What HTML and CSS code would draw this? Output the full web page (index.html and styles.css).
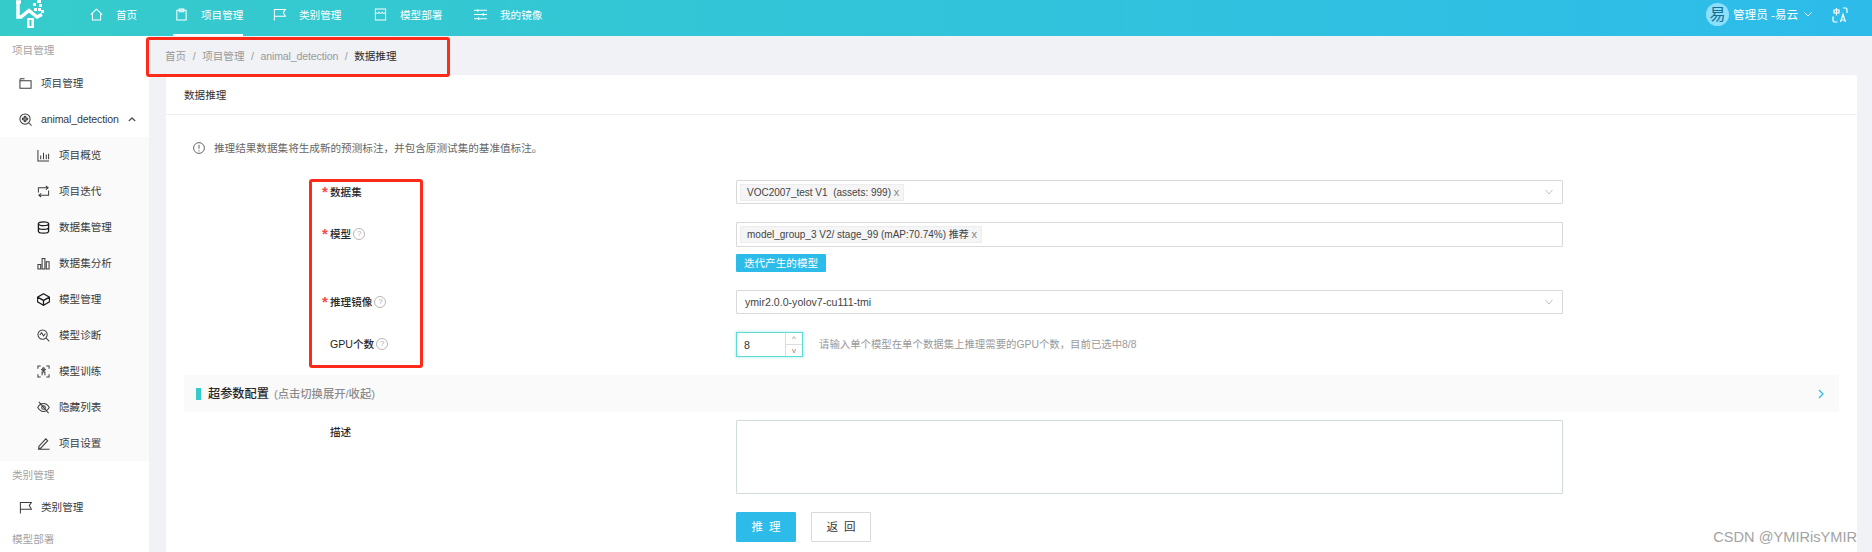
FILE: index.html
```html
<!DOCTYPE html>
<html lang="zh-CN">
<head>
<meta charset="utf-8">
<title>数据推理</title>
<link rel="stylesheet" href="styles.css">
</head>
<body>
<header class="topbar">
  <svg class="logo" viewBox="0 0 30 30"><path class="logo-line" d="M1 2h5M3 2v15h3l8-6.500L22 17l5-2.500"/><path d="M12 18h7v10h-7z"/><path class="logo-slot" d="M14.500 20h2v6h-2z"/><rect x="18" y="3" width="3" height="3"/><rect x="22" y="0" width="4" height="3"/><rect x="24" y="4" width="3" height="3"/><rect x="19" y="8" width="3" height="3"/><rect x="23" y="8" width="3" height="3"/><rect x="26" y="10" width="3" height="3"/></svg>
  <nav class="nav">
    <a class="nav-item"><svg class="ico" viewBox="0 0 14 14"><path d="M.8 7.200 7 1.200l6.200 6M2.600 6v7h8.800V6"/></svg><span>首页</span></a>
    <a class="nav-item active"><svg class="ico" viewBox="0 0 14 14"><path d="M2 2.500h10v10.500H2zM4.500 1h5v3h-5z"/></svg><span>项目管理</span></a>
    <a class="nav-item"><svg class="ico" viewBox="0 0 14 14"><path d="M1.500 13.500V1.500h12L11 5l2.500 4H1.500"/></svg><span>类别管理</span></a>
    <a class="nav-item"><svg class="ico" viewBox="0 0 14 14"><path d="M1.500 1h11v12h-11zM1.500 4.500c1 1.600 2.800 1.600 3.700 0 .9 1.600 2.700 1.600 3.600 0 .9 1.600 2.700 1.600 3.700 0"/></svg><span>模型部署</span></a>
    <a class="nav-item"><svg class="ico" viewBox="0 0 14 14"><path d="M0 2.500h14M0 7h14M0 11.500h14M4 1v3M10 5.500v3M5 10v3"/></svg><span>我的镜像</span></a>
  </nav>
  <div class="user">
    <span class="avatar">易</span>
    <span class="user-name">管理员 -易云</span>
    <svg class="user-caret" viewBox="0 0 8 5"><path d="M.5.500 4 4 7.500.5"/></svg>
    <svg class="lang" viewBox="0 0 16 16"><path d="M11 1h2.500a1.500 1.500 0 0 1 1.500 1.500V6M1 9.500V13a2 2 0 0 0 2 2h2.500"/><path d="M2 3h5v3H2zM4.500 1v7.500M8.500 15l2.500-7.500 2.500 7.500M9.500 13h3"/></svg>
  </div>
</header>
<div class="layout">
  <aside class="sidebar">
    <div class="group-title first">项目管理</div>
    <a class="side-item"><svg class="ico dark" viewBox="0 0 14 14"><path d="M1 2.500V12h12V4H1M1 2h5"/></svg><span>项目管理</span></a>
    <a class="side-item"><svg class="ico dark" viewBox="0 0 14 14"><circle cx="6.500" cy="6.500" r="5.500"/><circle cx="6.500" cy="4.500" r="1"/><circle cx="6.500" cy="8.500" r="1"/><circle cx="4.500" cy="6.500" r="1"/><circle cx="8.500" cy="6.500" r="1"/><path d="m10.500 10.500 3 3"/></svg><span class="latin">animal_detection</span><svg class="caret-up" viewBox="0 0 8 5"><path d="M.8 4 4 1l3.200 3"/></svg></a>
    <div class="submenu">
      <a class="sub-item"><svg class="ico dark" viewBox="0 0 14 14"><path d="M1 1v12h12M4 11V7M7 11V4M10 11V6M12.500 11V5"/></svg><span>项目概览</span></a>
      <a class="sub-item"><svg class="ico dark" viewBox="0 0 14 14"><path d="M1.500 8V3h10M9.500 1l2.500 2-2.500 2M12.500 6v5h-10M4.500 9l-2.500 2 2.500 2"/></svg><span>项目迭代</span></a>
      <a class="sub-item"><svg class="ico black" viewBox="0 0 14 14"><ellipse cx="7" cy="3" rx="5.500" ry="2"/><path d="M1.500 3v8c0 1.100 2.500 2 5.500 2s5.500-.9 5.500-2V3M1.500 7c0 1.100 2.500 2 5.500 2s5.500-.9 5.500-2"/></svg><span>数据集管理</span></a>
      <a class="sub-item"><svg class="ico dark" viewBox="0 0 14 14"><path d="M1 8h3v5H1zM5.500 1.500h3V13h-3zM10 5h3v8h-3z"/></svg><span>数据集分析</span></a>
      <a class="sub-item"><svg class="ico black" viewBox="0 0 14 14"><path d="M7 .8 13.500 4.500v5L7 13.200.5 9.500v-5zM.5 4.500 7 8l6.500-3.500M7 8v5"/></svg><span>模型管理</span></a>
      <a class="sub-item"><svg class="ico dark" viewBox="0 0 14 14"><circle cx="6" cy="6" r="5"/><path d="m9.800 9.800 3.500 3.500M3 6.500 5 4l2 3.500L9 5"/></svg><span>模型诊断</span></a>
      <a class="sub-item"><svg class="ico dark" viewBox="0 0 14 14"><path d="M1 4V1h3M10 1h3v3M1 10v3h3M13 10v3h-3M4.500 4.500 7 6.500l2.500-2M5.500 11V7.500h3V11"/><circle cx="7" cy="4" r="1"/></svg><span>模型训练</span></a>
      <a class="sub-item"><svg class="ico dark" viewBox="0 0 14 14"><path d="M.8 7C2.500 4 4.500 2.800 7 2.800S11.500 4 13.200 7c-1.700 3-3.700 4.200-6.200 4.200S2.500 10 .8 7zM2 1l10.500 12"/><circle cx="7" cy="7" r="2"/></svg><span>隐藏列表</span></a>
      <a class="sub-item"><svg class="ico dark" viewBox="0 0 14 14"><path d="m2 10 7.500-8 2 2L4 12H2zM1 13.300h12.500"/></svg><span>项目设置</span></a>
    </div>
    <div class="group-title">类别管理</div>
    <a class="side-item"><svg class="ico dark" viewBox="0 0 14 14"><path d="M1.500 13.500V1.500h12L11 5l2.500 4H1.500"/></svg><span>类别管理</span></a>
    <div class="group-title">模型部署</div>
  </aside>
  <main class="main">
    <div class="crumbs">
      <a>首页</a><i>/</i><a>项目管理</a><i>/</i><a class="latin">animal_detection</a><i>/</i><b>数据推理</b>
    </div>
    <section class="card">
      <h1 class="card-head">数据推理</h1>
      <div class="card-body">
        <p class="tip"><svg class="tip-ico" viewBox="0 0 12 12"><circle cx="6" cy="6" r="5.400"/><path d="M6 2.800v4M6 8.200v1.200"/></svg>推理结果数据集将生成新的预测标注，并包含原测试集的基准值标注。</p>
        <div class="row">
          <label class="label"><em>*</em>数据集</label>
          <div class="field select"><span class="tag">VOC2007_test V1&nbsp; (assets: 999) <s>x</s></span><svg class="arrow" viewBox="0 0 8 6"><path d="M.5.800 4 5 7.500.8"/></svg></div>
        </div>
        <div class="row">
          <label class="label"><em>*</em>模型<span class="help">?</span></label>
          <div>
            <div class="field model"><span class="tag">model_group_3 V2/ stage_99 (mAP:70.74%) 推荐 <s>x</s></span></div>
            <button class="mini-btn">迭代产生的模型</button>
          </div>
        </div>
        <div class="row">
          <label class="label"><em>*</em>推理镜像<span class="help">?</span></label>
          <div class="field select"><span class="value">ymir2.0.0-yolov7-cu111-tmi</span><svg class="arrow" viewBox="0 0 8 6"><path d="M.5.800 4 5 7.500.8"/></svg></div>
        </div>
        <div class="row">
          <label class="label"><em></em>GPU个数<span class="help">?</span></label>
          <div class="gpu-field">
            <div class="number"><span class="num-value">8</span><span class="stepper"><i>^</i><i>v</i></span></div>
            <span class="hint">请输入单个模型在单个数据集上推理需要的GPU个数，目前已选中8/8</span>
          </div>
        </div>
        <div class="collapse">
          <span class="bar"></span><strong>超参数配置</strong><small>(点击切换展开/收起)</small>
          <svg class="more" viewBox="0 0 6 10"><path d="m1 1 4 4-4 4"/></svg>
        </div>
        <div class="row">
          <label class="label"><em></em>描述</label>
          <div class="textarea"></div>
        </div>
        <div class="row">
          <span></span>
          <div class="actions"><button class="btn primary">推理</button><button class="btn">返回</button></div>
        </div>
      </div>
    </section>
  </main>
</div>
<div class="mark mark-crumb"></div>
<div class="mark mark-form"></div>
<div class="watermark">CSDN @YMIRisYMIR</div>
</body>
</html>
```

FILE: styles.css
```css
* { box-sizing: border-box; }
html, body { margin: 0; height: 552px; overflow: hidden; }
body {
  position: relative;
  background: #f0f2f6;
  color: #333;
  font: 10.6px/16px "Liberation Sans", "Noto Sans CJK SC", sans-serif;
}
svg { display: block; flex: none; fill: none; }
a { color: inherit; text-decoration: none; }
.latin { letter-spacing: -.15px; }

/* top bar */
.topbar {
  display: flex;
  height: 36px;
  padding-left: 15px;
  color: #fff;
  background: linear-gradient(90deg, #36cbcb, #2dbcea);
}
.logo { width: 30px; height: 30px; margin-right: 43px; fill: #fff; }
.logo-line { fill: none; stroke: #fff; stroke-width: 3.500; }
.logo-slot { fill: #36cbcb; }
.nav { display: grid; grid-template-columns: 85px 98px 101px 100px auto; }
.nav-item {
  display: flex;
  align-items: center;
  gap: 13px;
  width: 70px;
  padding: 0 0 5px 2px;
  border-bottom: 2px solid transparent;
  white-space: nowrap;
}
.nav-item.active { border-bottom-color: #fff; }
.ico { width: 13px; height: 13px; stroke: currentColor; stroke-width: 1.100; }
.ico.dark { stroke: #3d3d3d; }
.ico.black { stroke: #1c1c1c; stroke-width: 1.400; }
.user {
  display: flex;
  align-items: center;
  height: 29px;
  margin-left: auto;
  padding-right: 24px;
}
.avatar {
  display: flex;
  align-items: center;
  justify-content: center;
  width: 23px;
  height: 23px;
  border-radius: 50%;
  background: #8de0fb;
  color: #146f93;
  font-size: 16px;
}
.user-name { margin-left: 4px; width: 71px; font-size: 11.600px; white-space: nowrap; }
.user-caret { width: 8px; height: 5px; stroke: #fff; }
.lang { width: 16px; height: 16px; margin-left: 20px; stroke: #fff; stroke-width: 1.200; }

/* layout */
.layout { display: flex; height: 516px; }
.sidebar { flex: none; width: 149px; background: #fff; color: #3a3a3a; overflow: hidden; }
.group-title { height: 28px; padding-left: 12px; line-height: 28px; color: #a3a3a3; }
.group-title.first { margin-bottom: 1px; }
.side-item, .sub-item { display: flex; align-items: center; gap: 9px; height: 36px; }
.side-item { padding-left: 19px; }
.sub-item { padding-left: 37px; }
.submenu { background: #fafafa; }
.caret-up { width: 8px; height: 5px; stroke: #555; stroke-width: 1.300; }

.main { flex: 1; padding: 0 15px 0 17px; min-width: 0; }
.crumbs { display: flex; align-items: center; height: 39px; margin-left: -1px; color: #999; white-space: nowrap; }
.crumbs i { margin: 0 6.500px; font-style: normal; }
.crumbs b { font-weight: 400; color: #2c2c2c; }

.card { height: 480px; background: #fff; border-radius: 2px; }
.card-head {
  height: 40px;
  margin: 0;
  padding-left: 18px;
  border-bottom: 1px solid #eceef1;
  font-size: 10.6px;
  font-weight: 400;
  line-height: 40px;
}
.card-body { padding: 25px 18px 0; }
.tip { display: flex; align-items: center; gap: 9px; height: 16px; margin: 0 0 24px 9px; color: #666; }
.tip-ico { width: 12px; height: 12px; stroke: #666; }

/* form */
.row { display: grid; grid-template-columns: 552px 827px; margin-bottom: 18px; }
.label { display: flex; align-items: center; align-self: start; height: 24px; padding-left: 138px; font-weight: 500; color: #262626; }
.label em { width: 8px; color: #f5484a; font-size: 15px; font-weight: 700; font-style: normal; line-height: 14px; }
.help {
  display: flex;
  align-items: center;
  justify-content: center;
  width: 12px;
  height: 12px;
  margin-left: 2px;
  border: 1px solid #b8b8b8;
  border-radius: 50%;
  color: #aaa;
  font-size: 8px;
  font-weight: 400;
}
.field {
  display: flex;
  align-items: center;
  border: 1px solid #d9d9d9;
  border-radius: 1px;
  background: #fff;
  color: #444;
}
.select { justify-content: space-between; height: 24px; padding: 0 9px 0 3px; }
.model { height: 25px; padding-left: 3px; }
.tag {
  display: block;
  height: 17px;
  padding: 0 4px 0 6px;
  background: #f5f5f5;
  border: 1px solid #ededed;
  font-size: 10px;
  line-height: 15px;
  white-space: pre;
}
.tag s { color: #888; font-size: 11px; text-decoration: none; }
.value { padding-left: 5px; }
.arrow { width: 8px; height: 6px; stroke: #bfbfbf; }
.mini-btn {
  display: block;
  width: 90px;
  height: 18px;
  margin-top: 7px;
  padding: 0;
  border: 0;
  border-radius: 1px;
  background: #2dbcea;
  color: #fff;
  font: inherit;
}
.gpu-field { display: flex; align-items: center; gap: 16px; }
.number {
  display: flex;
  width: 67px;
  height: 25px;
  border: 1px solid #5cdbd8;
  box-shadow: 0 0 2px 1px rgba(54, 203, 203, .25);
  color: #333;
}
.num-value { flex: 1; padding-left: 7px; line-height: 24px; }
.stepper { display: flex; flex-direction: column; width: 17px; border-left: 1px solid #ddd; color: #888; font-size: 8px; text-align: center; }
.stepper i { flex: 1; font-style: normal; line-height: 11px; }
.stepper i + i { border-top: 1px solid #ddd; }
.hint { color: #999; font-size: 10.400px; white-space: nowrap; }

.collapse {
  display: flex;
  align-items: center;
  height: 37px;
  margin-bottom: 8px;
  padding: 0 15px 0 12px;
  background: #fafafa;
}
.bar { width: 5px; height: 12px; margin-right: 7px; background: #36cbcb; }
.collapse strong { font-size: 12.200px; font-weight: 500; color: #262626; }
.collapse small { margin-left: 5px; font-size: 11.300px; font-weight: 500; color: #8c8c8c; }
.more { width: 6px; height: 10px; margin-left: auto; stroke: #2dbcea; stroke-width: 1.300; }
.textarea { height: 74px; border: 1px solid #cfdcda; border-radius: 1px; }
.actions { display: flex; gap: 15px; }
.btn {
  width: 60px;
  height: 30px;
  padding: 0;
  border: 1px solid #d9d9d9;
  border-radius: 1px;
  background: #fff;
  color: #333;
  font: inherit;
  font-size: 11.500px;
  letter-spacing: 6px;
  text-indent: 6px;
}
.btn.primary { border-color: #2dbcea; background: #2dbcea; color: #fff; }

/* overlays: screenshot annotations */
.mark { position: absolute; border: 3px solid #ff2a1a; border-radius: 3px; }
.mark-crumb { left: 146px; top: 37px; width: 304px; height: 40px; }
.mark-form { left: 309px; top: 179px; width: 114px; height: 189px; }
.watermark {
  position: absolute;
  right: 15px;
  top: 529px;
  font: 14.600px/16px "Liberation Sans", sans-serif;
  color: #a3a3a3;
  white-space: nowrap;
}
```
